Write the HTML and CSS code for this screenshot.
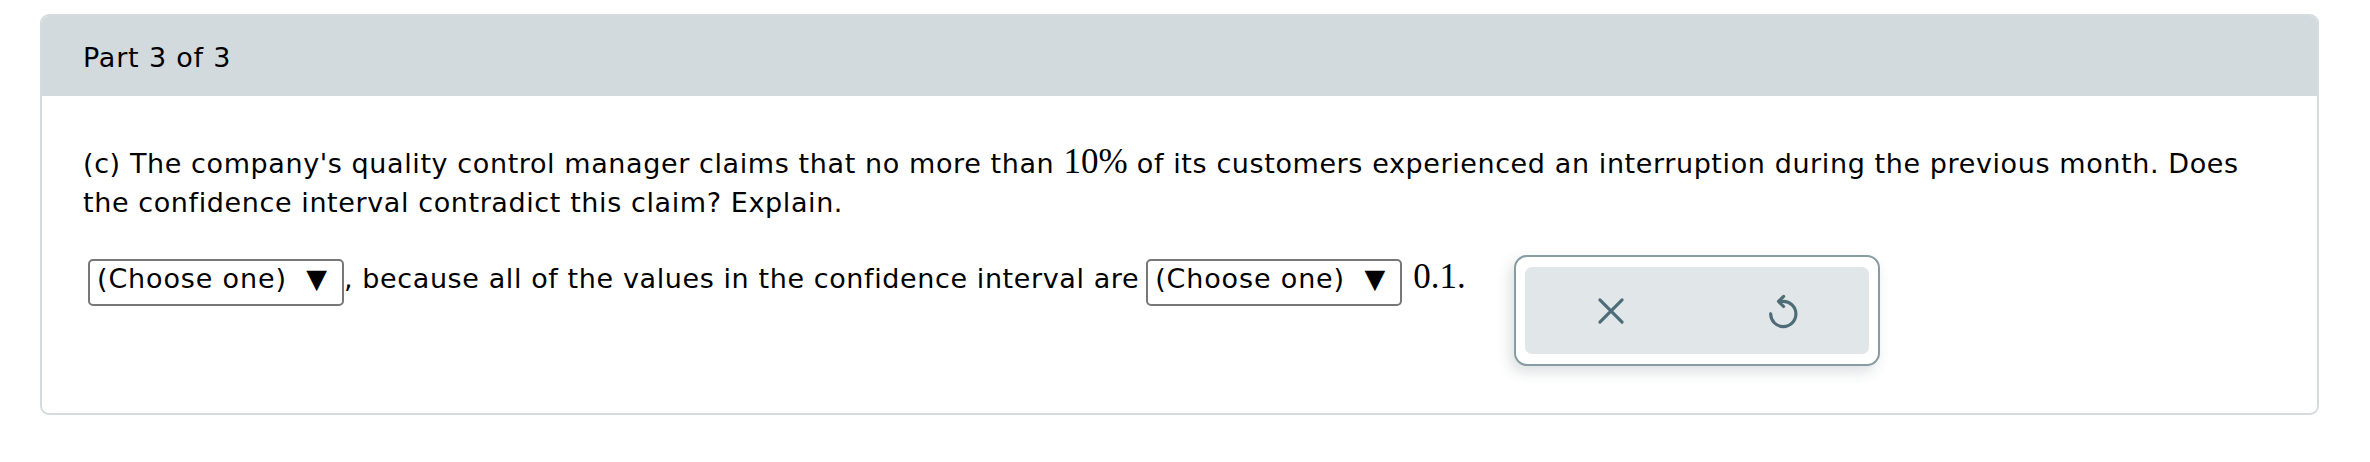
FILE: index.html
```html
<!DOCTYPE html>
<html>
<head>
<meta charset="utf-8">
<link rel="stylesheet" href="styles.css">
</head>
<body>
<div class="card">
  <div class="card-header">Part 3 of 3</div>
  <div class="card-body">
    <p class="question">(c) The company's quality control manager claims that no more than <span class="math">10%</span> of its customers experienced an interruption during the previous month. Does the confidence interval contradict this claim? Explain.</p>
    <div class="answer-row">
      <span class="dropdown dd-first"><span class="dd-label">(Choose one)</span><span class="dd-arrow">▼</span></span>
      <span class="txt">, because all of the values in the confidence interval are</span>
      <span class="dropdown dd-second"><span class="dd-label">(Choose one)</span><span class="dd-arrow">▼</span></span>
      <span class="math math-row">0.1.</span>
      <div class="toolbox">
        <div class="toolbox-inner">
          <button class="tool-btn" aria-label="Clear">
            <svg width="28" height="28" viewBox="0 0 24 24"><path d="M2.5 2.5 L21.5 21.5 M21.5 2.5 L2.5 21.5" fill="none" stroke="#4e6c78" stroke-width="2.7" stroke-linecap="round"/></svg>
          </button>
          <button class="tool-btn" aria-label="Undo">
            <svg width="36" height="36" viewBox="0 0 24 24"><path d="M9.6 5.6 H12 A8.4 8.4 0 1 1 3.8 13.8" fill="none" stroke="#4e6c78" stroke-width="2.1" stroke-linecap="round"/><path d="M12.4 2.2 L9 5.6 L12.4 9" fill="none" stroke="#4e6c78" stroke-width="2.1" stroke-linecap="round" stroke-linejoin="round"/></svg>
          </button>
        </div>
      </div>
    </div>
  </div>
</div>
</body>
</html>
```

FILE: styles.css
```css
html, body {
  margin: 0;
  padding: 0;
  background: #ffffff;
}

body {
  font-family: "DejaVu Sans", Verdana, sans-serif;
  color: #000000;
  padding: 14px 0 0 40px;
}

.card {
  box-sizing: border-box;
  width: 2279px;
  border: 2px solid #d5dcdf;
  border-radius: 9px;
  overflow: hidden;
  background: #ffffff;
}

.card-header {
  box-sizing: border-box;
  height: 82px;
  margin: -2px -2px 0 -2px;
  background: #d3dadd;
  display: flex;
  align-items: center;
  padding-left: 43px;
  padding-top: 4px;
  font-size: 27px;
  letter-spacing: 0.8px;
}

.card-body {
  padding: 48px 39px 47px 41px;
}

.question {
  margin: 0;
  font-size: 27px;
  line-height: 39px;
  letter-spacing: 0.6px;
}

.math {
  font-family: "Liberation Serif", "Times New Roman", serif;
  font-size: 35px;
  line-height: 30px;
  letter-spacing: 0;
}

.answer-row {
  margin-top: 37px;
  display: flex;
  align-items: baseline;
  font-size: 27px;
  letter-spacing: 0.6px;
}

.txt {
  line-height: 35px;
  white-space: pre;
}

.dropdown {
  box-sizing: border-box;
  display: inline-flex;
  align-items: baseline;
  justify-content: space-between;
  width: 256px;
  height: 47px;
  border: 2px solid #787878;
  border-radius: 5px;
  padding: 0 15px 0 7px;
  line-height: 35px;
  background: #ffffff;
  letter-spacing: 0.85px;
}

.dd-first {
  margin-left: 5px;
}

.dd-second {
  margin-left: 7px;
}

.dd-arrow {
  letter-spacing: 0;
}

.math-row {
  margin-left: 11px;
}

.toolbox {
  align-self: flex-start;
  margin-top: -4px;
  margin-left: 48px;
  box-sizing: border-box;
  width: 366px;
  height: 111px;
  border: 2px solid #889ca4;
  border-radius: 13px;
  padding: 10px 9px;
  background: #ffffff;
  box-shadow: -4px 6px 14px rgba(40, 60, 70, 0.16);
}

.toolbox-inner {
  height: 100%;
  background: #e1e6e8;
  border-radius: 7px;
  display: flex;
  align-items: center;
  justify-content: center;
  gap: 112px;
}

.tool-btn {
  border: none;
  background: transparent;
  padding: 0;
  margin: 0;
  width: 60px;
  height: 60px;
  display: flex;
  align-items: center;
  justify-content: center;
}
```
